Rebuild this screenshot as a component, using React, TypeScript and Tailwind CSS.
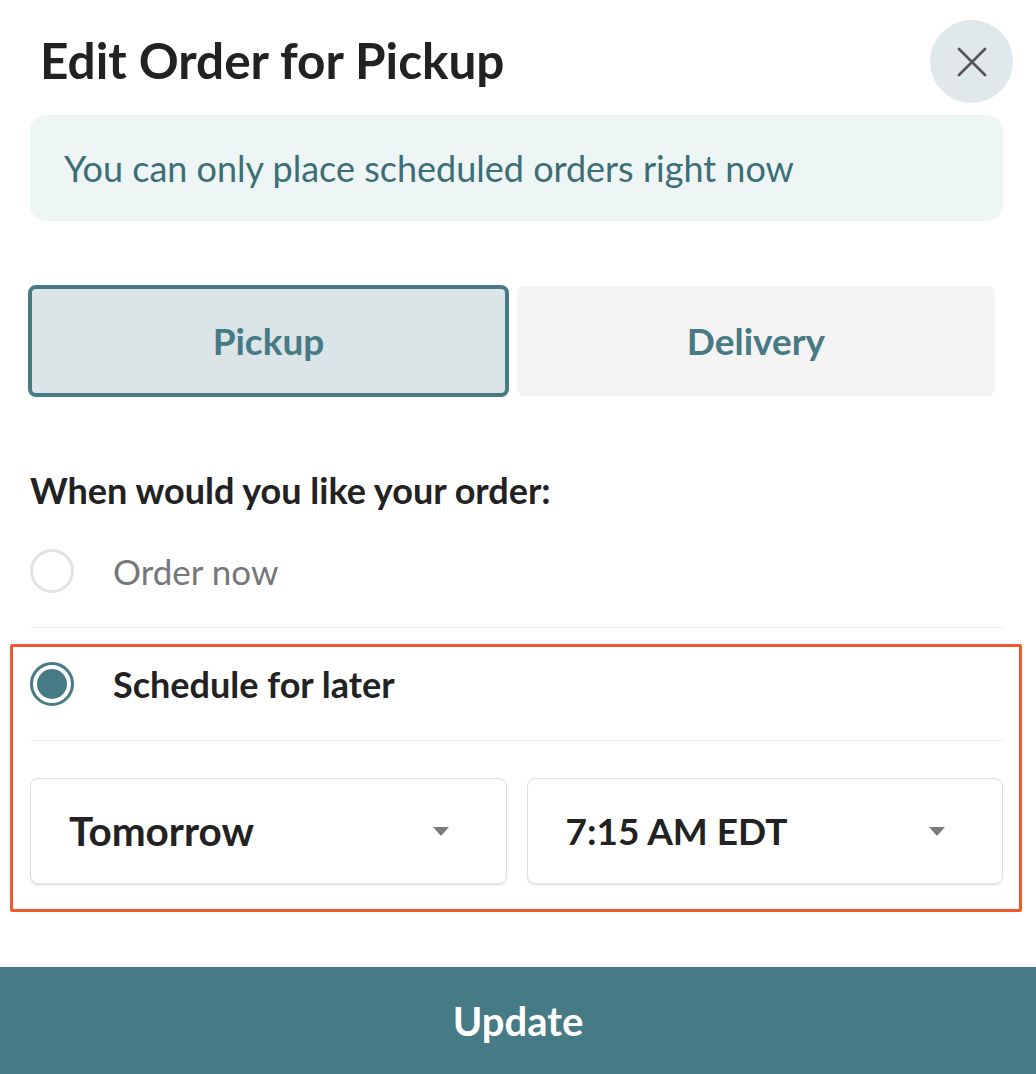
import React from "react";

const font = { fontFamily: "Lato, 'Noto Sans', sans-serif" };

function Caret() {
  return (
    <svg width="18" height="11" viewBox="0 0 18 11" className="shrink-0">
      <path d="M1 1 L17 1 L9 10 Z" fill="#7a7a7a" />
    </svg>
  );
}

export default function App() {
  return (
    <div className="relative w-[1036px] h-[1074px] bg-white flex flex-col overflow-hidden" style={font}>
      {/* Header */}
      <div className="flex items-center justify-between pl-[40px] pr-[23px] pt-[20px]">
        <h1 className="text-[49.5px] font-bold text-[#222222] leading-none -mt-[2px]">Edit Order for Pickup</h1>
        <button className="w-[83px] h-[83px] rounded-full bg-[#e1e8eb] flex items-center justify-center">
          <svg width="32" height="32" viewBox="0 0 32 32">
            <path d="M3 3 L29 29 M29 3 L3 29" stroke="#555555" strokeWidth="2.6" strokeLinecap="round" />
          </svg>
        </button>
      </div>

      {/* Info */}
      <div className="mt-[12px] ml-[30px] mr-[33px] h-[106px] rounded-[16px] bg-[#eef5f5] flex items-center pl-[34px]">
        <span className="text-[36px] text-[#3d6e75] leading-none">You can only place scheduled orders right now</span>
      </div>

      {/* Tabs */}
      <div className="mt-[64px] ml-[28px] mr-[41px] flex items-center gap-[8px]">
        <div className="w-[481px] h-[112px] rounded-[8px] border-[4px] border-[#467a84] bg-[#dbe4e6] flex items-center justify-center">
          <span className="text-[37px] font-bold text-[#467a84]">Pickup</span>
        </div>
        <div className="flex-1 h-[110px] rounded-[8px] bg-[#f4f4f4] flex items-center justify-center">
          <span className="text-[37px] font-bold text-[#467a84]">Delivery</span>
        </div>
      </div>

      {/* Question */}
      <div className="mx-[30px] mr-[33px] mt-[73px] h-[40px] flex items-center">
        <span className="text-[36px] font-bold text-[#222222] leading-none">When would you like your order:</span>
      </div>

      {/* Options */}
      <div className="ml-[30px] mr-[33px] mt-[5px] flex flex-col">
        <div className="h-[113px] flex items-center border-b border-[#eeeeee]">
          <div className="w-[44px] h-[44px] rounded-full border-[3px] border-[#e2e2e2] shrink-0" />
          <span className="ml-[39px] text-[35px] text-[#777777]">Order now</span>
        </div>
        <div className="h-[113px] flex items-center border-b border-[#eeeeee]">
          <div className="w-[44px] h-[44px] rounded-full border-[3px] border-[#467a84] shrink-0 flex items-center justify-center">
            <div className="w-[30px] h-[30px] rounded-full bg-[#467a84]" />
          </div>
          <span className="ml-[39px] text-[36px] font-bold text-[#222222]">Schedule for later</span>
        </div>
      </div>

      {/* Selects */}
      <div className="ml-[30px] mr-[33px] mt-[37px] flex gap-[20px]">
        <div className="flex-1 h-[106px] rounded-[8px] border border-[#dddddd] shadow-[0_2px_0_#ececec] flex items-center justify-between pl-[38px] pr-[56px]">
          <span className="text-[40.5px] font-bold text-[#222222]">Tomorrow</span>
          <Caret />
        </div>
        <div className="flex-1 h-[106px] rounded-[8px] border border-[#dddddd] shadow-[0_2px_0_#ececec] flex items-center justify-between pl-[38px] pr-[56px]">
          <span className="text-[37px] font-bold text-[#222222]">7:15 AM EDT</span>
          <Caret />
        </div>
      </div>

      {/* Update */}
      <button className="mt-auto h-[107px] w-full bg-[#467a84] flex items-center justify-center">
        <span className="text-[40px] font-bold text-white">Update</span>
      </button>

      {/* Annotation highlight */}
      <div className="absolute left-[10px] top-[644px] w-[1012px] h-[268px] border-[3px] border-[#ee5a2b] rounded-[2px] pointer-events-none" />
    </div>
  );
}
